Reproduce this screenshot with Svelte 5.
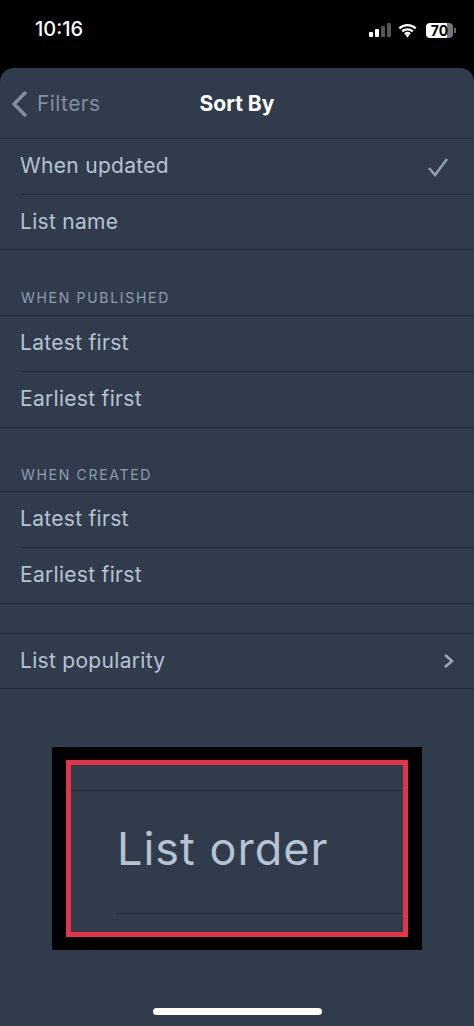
<script>
	const sections = [
		{ title: null, rows: [{ label: 'When updated', checked: true }, { label: 'List name' }] },
		{ title: 'WHEN PUBLISHED', rows: [{ label: 'Latest first' }, { label: 'Earliest first' }] },
		{ title: 'WHEN CREATED', rows: [{ label: 'Latest first' }, { label: 'Earliest first' }] }
	];
</script>

<div class="phone">
	<div class="status">
		<span class="time">10:16</span>
		<div class="status-icons">
			<svg class="signal" width="22" height="14" viewBox="0 0 22 14">
				<rect x="0" y="9" width="4" height="5" rx="1" fill="#fff" />
				<rect x="6" y="6" width="4" height="8" rx="1" fill="#fff" />
				<rect x="12" y="3" width="4" height="11" rx="1" fill="#555" />
				<rect x="18" y="0" width="4" height="14" rx="1" fill="#555" />
			</svg>
			<svg class="wifi" width="19" height="15" viewBox="0 0 22 16">
				<path d="M1.5 5.5a14 14 0 0 1 19 0M4.8 9a9.2 9.2 0 0 1 12.4 0M8 12.2a4.6 4.6 0 0 1 6 0" fill="none" stroke="#fff" stroke-width="2.6" />
				<path d="M11 16l-2.2-2.6a3.4 3.4 0 0 1 4.4 0z" fill="#fff" />
			</svg>
			<div class="battery"><span class="level">70</span></div>
			<span class="nub"></span>
		</div>
	</div>

	<div class="sheet">
		<header class="nav">
			<div class="back">
				<svg width="16" height="26" viewBox="0 0 16 26">
					<path d="M14 2L3 13l11 11" fill="none" stroke="#7f8fa3" stroke-width="3.4" stroke-linecap="round" stroke-linejoin="round" />
				</svg>
				<span>Filters</span>
			</div>
			<h1>Sort By</h1>
		</header>

		{#each sections as section}
			{#if section.title}
				<div class="section-title">{section.title}</div>
			{/if}
			<ul class="group">
				{#each section.rows as row}
					<li class="row">
						<span class="label">{row.label}</span>
						{#if row.checked}
							<svg width="22" height="20" viewBox="0 0 22 20">
								<path d="M2 11l6 7L20 2" fill="none" stroke="#8e9db0" stroke-width="2.6" />
							</svg>
						{/if}
					</li>
				{/each}
			</ul>
		{/each}

		<div class="row single">
			<span class="label">List popularity</span>
			<svg class="chev" width="12" height="16" viewBox="0 0 12 16">
				<path d="M2 2l7 6-7 6" fill="none" stroke="#9aa8ba" stroke-width="2.6" />
			</svg>
		</div>

		<div class="callout">
			<div class="frame">
				<div class="crop-line"></div>
				<div class="crop-text">List order</div>
				<div class="crop-line inset"></div>
			</div>
		</div>

		<div class="home"></div>
	</div>
</div>

<style>
	:global(body) {
		background: #000;
	}

	.phone {
		width: 474px;
		height: 1026px;
		display: flex;
		flex-direction: column;
		background: #000;
		overflow: hidden;
		font-family: Inter, sans-serif;
	}

	.status {
		height: 68px;
		flex: none;
		display: flex;
		justify-content: space-between;
		align-items: flex-start;
		padding: 18px 18px 0 35px;
		box-sizing: border-box;
		color: #fff;
	}

	.time {
		font-size: 20px;
		font-weight: 500;
		line-height: 22px;
	}

	.status-icons {
		display: flex;
		align-items: center;
		gap: 1px;
		height: 24px;
	}

	.wifi {
		margin-left: 6px;
		margin-right: 8px;
	}

	.battery {
		width: 27px;
		height: 15px;
		border-radius: 4px;
		background: linear-gradient(to right, #fff 78%, #777 78%);
		display: flex;
		align-items: center;
		justify-content: center;
	}

	.level {
		color: #000;
		font-size: 14px;
		font-weight: 700;
	}

	.nub {
		width: 2px;
		height: 5px;
		background: #666;
	}

	.sheet {
		flex: 1;
		display: flex;
		flex-direction: column;
		background: #303c4b;
		border-radius: 14px 14px 0 0;
	}

	.nav {
		height: 71px;
		flex: none;
		box-sizing: border-box;
		border-bottom: 1px solid #222c39;
		display: flex;
		align-items: center;
		justify-content: center;
		position: relative;
	}

	.back {
		position: absolute;
		left: 11px;
		top: 23px;
		display: flex;
		align-items: center;
		gap: 10px;
		color: #7f8fa3;
		font-size: 21px;
		line-height: 26px;
		letter-spacing: 0.4px;
	}

	h1 {
		margin: 0;
		color: #fff;
		font-size: 21px;
		font-weight: 700;
	}

	.group {
		list-style: none;
		margin: 0;
		padding: 0 0 0 21px;
		border-bottom: 1px solid #222c39;
	}

	.row {
		height: 55px;
		display: flex;
		align-items: center;
		justify-content: space-between;
		padding-right: 25px;
	}

	.group .row + .row {
		border-top: 1px solid #222c39;
	}

	.group:first-of-type .row + .row {
		height: 54px;
	}

	.label {
		margin-left: -1px;
		padding-bottom: 2px;
		color: #b5c3d3;
		font-size: 21px;
		letter-spacing: 0.3px;
	}

	.section-title {
		height: 64px;
		box-sizing: border-box;
		padding: 38px 0 0 21px;
		border-bottom: 1px solid #222c39;
		color: #8e9db0;
		font-size: 14px;
		line-height: 17px;
		letter-spacing: 1.7px;
	}

	.group:first-of-type + .section-title {
		height: 66px;
		padding-top: 39px;
	}

	.single {
		margin-top: 29px;
		height: 56px;
		box-sizing: border-box;
		padding: 0 19px 0 21px;
		border-top: 1px solid #222c39;
		border-bottom: 1px solid #222c39;
	}

	.callout {
		margin: 58px 0 0 52px;
		width: 370px;
		height: 203px;
		box-sizing: border-box;
		padding: 13px 14px;
		background: #000;
	}

	.frame {
		height: 100%;
		box-sizing: border-box;
		border: 5px solid #e5344a;
		background: #303c4b;
		padding-top: 25px;
	}

	.crop-line {
		height: 1px;
		background: #222c39;
	}

	.crop-line.inset {
		margin-left: 45px;
	}

	.crop-text {
		height: 122px;
		box-sizing: border-box;
		padding: 28px 0 0 46px;
		color: #b5c3d3;
		font-size: 45px;
		line-height: 60px;
		letter-spacing: 1px;
	}

	.home {
		margin: 58px auto 0;
		width: 169px;
		height: 7px;
		border-radius: 4px;
		background: #fff;
	}
</style>
